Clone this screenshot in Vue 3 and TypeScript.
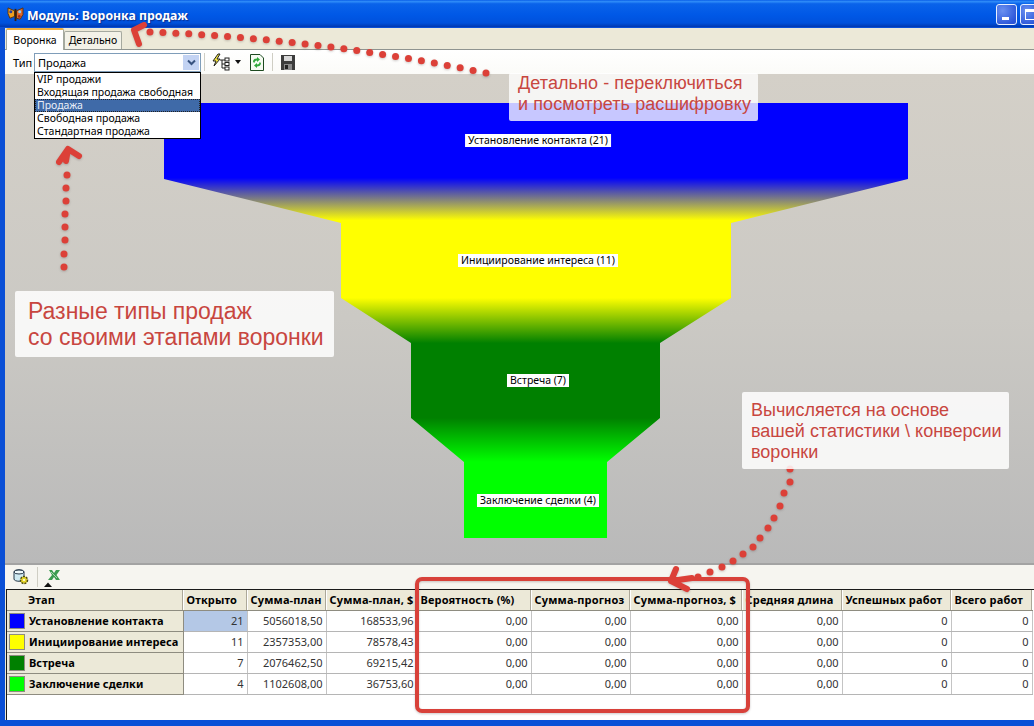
<script setup lang="ts">
const options = ['VIP продажи', 'Входящая продажа свободная', 'Продажа', 'Свободная продажа', 'Стандартная продажа']

const stages = [
  { name: 'Установление контакта', color: '#0000ff', open: 21, plan: '5056018,50', usd: '168533,96', label: 'Установление контакта (21)', y: 134 },
  { name: 'Инициирование интереса', color: '#ffff00', open: 11, plan: '2357353,00', usd: '78578,43', label: 'Инициирование интереса (11)', y: 254 },
  { name: 'Встреча', color: '#008000', open: 7, plan: '2076462,50', usd: '69215,42', label: 'Встреча (7)', y: 374 },
  { name: 'Заключение сделки', color: '#00ff00', open: 4, plan: '1102608,00', usd: '36753,60', label: 'Заключение сделки (4)', y: 494 },
]

const columns = [
  { title: 'Этап', w: 176 }, { title: 'Открыто', w: 64 }, { title: 'Сумма-план', w: 79 }, { title: 'Сумма-план, $', w: 91 },
  { title: 'Вероятность (%)', w: 114 }, { title: 'Сумма-прогноз', w: 99 }, { title: 'Сумма-прогноз, $', w: 112 },
  { title: 'Средняя длина', w: 100 }, { title: 'Успешных работ', w: 109 }, { title: 'Всего работ', w: 81 },
]

function bezier(p0: number[], c: number[], p2: number[], n: number): number[][] {
  const out: number[][] = []
  for (let i = 0; i < n; i++) {
    const t = i / (n - 1)
    const u = 1 - t
    out.push([u * u * p0[0] + 2 * u * t * c[0] + t * t * p2[0], u * u * p0[1] + 2 * u * t * c[1] + t * t * p2[1]])
  }
  return out
}

const dots: number[][] = [
  ...bezier([150, 32], [318, 38.5], [486, 73], 27),
  [67, 175], [66, 188], [66, 201], [65, 214], [65, 227], [65, 240], [64, 254], [64, 267],
  [790, 469], [790, 482], [784, 493], [780, 506], [774, 518], [768, 528], [760, 538], [753, 547],
  [743, 554], [733, 561], [722, 567], [710, 572], [698, 577],
]
</script>

<template>
  <div class="window">
    <header class="titlebar">
      <svg class="app-icon" width="17" height="15" viewBox="0 0 18 16">
        <path d="M1 1 L8 4 L8 10 L3 12 L1 7 Z" fill="#f0a020" stroke="#5b3210" stroke-width="1" />
        <path d="M17 1 L10 4 L10 12 L14 13 L17 8 Z" fill="#e0682a" stroke="#5b3210" stroke-width="1" />
        <circle cx="4" cy="5" r="1.600" fill="#30409a" />
        <circle cx="13.500" cy="5" r="1.600" fill="#8fd0f0" />
        <circle cx="13" cy="10" r="1.400" fill="#a02a20" />
        <path d="M9 2 V15" stroke="#3a2008" stroke-width="2" />
      </svg>
      <span class="title">Модуль: Воронка продаж</span>
      <div class="caption-buttons">
        <span class="cap-btn"><i class="min"></i></span>
        <span class="cap-btn"><i class="max"></i></span>
      </div>
    </header>

    <div class="client">
      <nav class="tabs">
        <span class="tab active">Воронка</span>
        <span class="tab">Детально</span>
      </nav>

      <div class="toolbar">
        <span class="type-label">Тип</span>
        <div class="combo">
          <span>Продажа</span>
          <span class="combo-btn">
            <svg width="9" height="7" viewBox="0 0 9 7"><path d="M1 1.5 L4.5 5 L8 1.5" fill="none" stroke="#37527f" stroke-width="2" /></svg>
          </span>
        </div>
        <i class="sep"></i>
        <svg class="tool tree" width="18" height="18" viewBox="0 0 18 18">
          <path d="M6 1 L1 8 L4 8 L2 13 L8 6 L5 6 L8 1 Z" fill="#f4e640" stroke="#222" stroke-width="1" />
          <path d="M8 7 H15 M10 7 V15 H13 M10 11 H13" fill="none" stroke="#222" />
          <rect x="13" y="5" width="4" height="3" fill="#fff" stroke="#222" />
          <rect x="13" y="9.500" width="4" height="3" fill="#fff" stroke="#222" />
          <rect x="13" y="14" width="4" height="3" fill="#fff" stroke="#222" />
        </svg>
        <svg class="tool drop" width="6" height="4" viewBox="0 0 6 4"><path d="M0 0 H6 L3 4 Z" fill="#111" /></svg>
        <svg class="tool refresh" width="14" height="17" viewBox="0 0 14 17">
          <path d="M.5 .5 H10 L13.500 4 V16.500 H.5 Z" fill="#f6fbf2" stroke="#1d4a20" />
          <path d="M7 3 L10 5.500 L7 8 V6.500 C5 6.500 4.500 8 4.500 9 L3 8 C3 5.500 5 4.500 7 4.500 Z" fill="#2fa83a" />
          <path d="M7 14 L4 11.500 L7 9 V10.500 C9 10.500 9.500 9.500 9.500 8 L11 9 C11 11.500 9 12.500 7 12.500 Z" fill="#2fa83a" />
        </svg>
        <i class="sep second"></i>
        <svg class="tool floppy" width="14" height="15" viewBox="0 0 14 15">
          <path d="M0 0 H14 V15 H0 Z" fill="#3c3c3c" />
          <rect x="3" y="1" width="8" height="5" fill="#d8d8d8" />
          <rect x="3" y="9" width="8" height="6" fill="#8a8a8a" />
          <rect x="4" y="10" width="3" height="4" fill="#222" />
        </svg>
      </div>

      <main class="chart">
        <svg class="funnel" viewBox="5 74 1029 489" width="1029" height="489">
          <defs>
            <linearGradient id="funnelFill" gradientUnits="userSpaceOnUse" x1="0" y1="103" x2="0" y2="538">
              <stop offset="0.172" stop-color="#0000ff" />
              <stop offset="0.27" stop-color="#ffff00" />
              <stop offset="0.448" stop-color="#ffff00" />
              <stop offset="0.552" stop-color="#008000" />
              <stop offset="0.724" stop-color="#008000" />
              <stop offset="0.825" stop-color="#00ff00" />
            </linearGradient>
          </defs>
          <path
            d="M164 103 H908 V179 L731 223 V298 L660 343 V418 L607 462 V538 H464 V462 L411 418 V343 L341 298 V223 L164 179 Z"
            fill="url(#funnelFill)"
          />
        </svg>
        <span
          v-for="s in stages"
          :key="s.label"
          class="funnel-label"
          :style="{ top: s.y - 74 + 'px' }"
        >{{ s.label }}</span>
      </main>

      <div class="grid-toolbar">
        <svg class="db" width="16" height="16" viewBox="0 0 16 16">
          <path d="M1 3 C1 0 11 0 11 3 V10 C11 13 1 13 1 10 Z" fill="#cfeaf2" stroke="#27384a" />
          <ellipse cx="6" cy="3" rx="5" ry="2" fill="#eef9fb" stroke="#27384a" />
          <circle cx="11" cy="11" r="3.500" fill="#e6d62a" stroke="#4d4a10" stroke-width="1.500" stroke-dasharray="2 1" />
          <circle cx="11" cy="11" r="1" fill="#fff" />
        </svg>
        <i class="sep third"></i>
        <svg class="xls" width="17" height="18" viewBox="0 0 17 18">
          <path d="M5 1 H8 L10 4 L12 1 H16 L12.500 6 L16 11 H12 L10 8 L8 11 H4 L8 6 Z" fill="#3c9a50" />
          <path d="M7 3 L13 9" stroke="#a6d8ae" />
          <path d="M0 18 L4 13.500 L8 18 Z" fill="#111" />
        </svg>
      </div>

      <section class="grid">
        <table>
          <colgroup>
            <col v-for="c in columns" :key="c.title" :style="{ width: c.w + 'px' }" />
          </colgroup>
          <thead>
            <tr>
              <th v-for="(c, i) in columns" :key="c.title" :class="{ first: i === 0 }">{{ c.title }}</th>
            </tr>
          </thead>
          <tbody>
            <tr v-for="(s, i) in stages" :key="s.name">
              <td class="stage">
                <span class="stage-inner">
                  <i class="swatch" :style="{ background: s.color }"></i>{{ s.name }}
                </span>
              </td>
              <td :class="{ selected: i === 0 }">{{ s.open }}</td>
              <td>{{ s.plan }}</td>
              <td>{{ s.usd }}</td>
              <td>0,00</td>
              <td>0,00</td>
              <td>0,00</td>
              <td>0,00</td>
              <td>0</td>
              <td>0</td>
            </tr>
          </tbody>
        </table>
      </section>
    </div>

    <ul class="dropdown">
      <li v-for="o in options" :key="o" :class="{ current: o === 'Продажа' }">{{ o }}</li>
    </ul>

    <svg class="marks" width="1034" height="726" viewBox="0 0 1034 726">
      <rect x="417" y="579" width="331" height="132" rx="5" fill="none" stroke="#d8413a" stroke-width="4" />
      <g fill="#dc4038">
        <circle v-for="(d, i) in dots" :key="i" :cx="d[0]" :cy="d[1]" r="3.500" />
      </g>
      <g fill="none" stroke="#dc4038" stroke-width="6" stroke-linecap="round" stroke-linejoin="round">
        <path d="M144 25 L134 30 L139 44" />
        <path d="M59 162 L68 149 L79 156 M68 149 L66 161" />
        <path d="M676 569 L671 581 L687 589 M671 581 L692 578" />
      </g>
    </svg>

    <aside class="note note-detail">Детально - переключиться<br />и посмотреть расшифровку</aside>
    <aside class="note note-types">Разные типы продаж<br />со своими этапами воронки</aside>
    <aside class="note note-calc">Вычисляется на основе<br />вашей статистики \ конверсии<br />воронки</aside>
  </div>
</template>

<style scoped>
.window {
  position: relative;
  width: 1034px;
  height: 726px;
  overflow: hidden;
  display: flex;
  flex-direction: column;
  background: #0a4fd6;
  font-family: "Noto Sans", "Open Sans", sans-serif;
  font-size: 11px;
  color: #000;
}
.titlebar {
  height: 27px;
  flex: none;
  display: flex;
  align-items: center;
  padding-left: 7px;
  background: linear-gradient(#0a5fe8 0, #2f8cf8 6%, #0a63ea 14%, #0058e6 55%, #0051dc 85%, #0038b0 100%);
}
.app-icon { flex: none; margin-top: 2px; }
.title {
  margin-left: 3px;
  color: #fff;
  font-weight: 700;
  font-size: 12.3px;
  margin-top: 3px;
  text-shadow: 1px 1px 1px #0a2f90;
}
.caption-buttons {
  margin-left: auto;
  display: flex;
  gap: 3px;
  margin-right: -7px;
  align-self: flex-start;
  margin-top: 4px;
}
.cap-btn {
  width: 21px;
  height: 21px;
  box-sizing: border-box;
  border: 1px solid #e8f0ff;
  border-radius: 3px;
  background: radial-gradient(circle at 30% 30%, #6a90f0, #2a55d8 80%);
  display: block;
  position: relative;
}
.cap-btn .min {
  position: absolute;
  left: 5px;
  bottom: 4px;
  width: 7px;
  height: 3px;
  background: #fff;
}
.cap-btn .max {
  position: absolute;
  left: 4px;
  top: 4px;
  width: 14px;
  height: 11px;
  border: 1px solid #fff;
  border-top-width: 3px;
  box-sizing: border-box;
}
.client {
  flex: 1;
  min-height: 0;
  margin: 1px 0 6px 5px;
  display: flex;
  flex-direction: column;
  background: #ece9d8;
}
.tabs {
  height: 21px;
  flex: none;
  display: flex;
  align-items: flex-end;
  border-bottom: 1px solid #8f9490;
  padding-left: 1px;
  font-size: 10.5px;
}
.tab {
  height: 17px;
  line-height: 17px;
  width: 56px;
  background: #f3f2e8;
  border: 1px solid #a5a99f;
  border-bottom: none;
  border-radius: 2px 2px 0 0;
  text-align: center;
}
.tab.active {
  height: 20px;
  line-height: 20px;
  width: 56px;
  background: #fff;
  border-top: 2px solid #f0b040;
  margin-bottom: -1px;
  position: relative;
  z-index: 1;
}
.toolbar {
  height: 24px;
  flex: none;
  box-sizing: border-box;
  background: linear-gradient(#fff, #fbfbf8);
  display: flex;
  align-items: center;
  padding-left: 8px;
}
.type-label { width: 21px; flex: none; }
.combo {
  width: 167px;
  height: 19px;
  box-sizing: border-box;
  flex: none;
  border: 1px solid #7f9db9;
  background: #fff;
  display: flex;
  align-items: center;
  justify-content: space-between;
  padding-left: 3px;
}
.combo-btn {
  width: 16px;
  height: 15px;
  margin-right: 1px;
  background: #c3d3f3;
  display: flex;
  align-items: center;
  justify-content: center;
}
.sep {
  width: 1px;
  height: 18px;
  flex: none;
  margin-left: 3px;
  background: #cfcec4;
}
.sep.second { margin-left: 8px; }
.tool { flex: none; }
.tree { margin-left: 7px; }
.drop { margin-left: 5px; }
.refresh { margin-left: 9px; }
.floppy { margin-left: 8px; }
.chart {
  position: relative;
  flex: 1;
  min-height: 0;
  background: linear-gradient(#d4d0c8 0, #cbc9c4 50%, #b9b9b9 100%);
  border-bottom: 2px solid #a3a3a3;
}
.funnel { display: block; }
.funnel-label {
  position: absolute;
  left: 533px;
  transform: translateX(-50%);
  height: 13px;
  line-height: 13px;
  padding: 0 3px;
  background: #fff;
  white-space: nowrap;
  font-size: 10.5px;
}
.grid-toolbar {
  height: 24px;
  flex: none;
  display: flex;
  align-items: center;
  padding-left: 8px;
  background: #f6f5f0;
}
.sep.third { margin-left: 8px; height: 20px; }
.xls { margin-left: 6px; margin-top: 1px; }
.grid {
  height: 131px;
  flex: none;
  box-sizing: border-box;
  background: #fff;
  border-left: 1px solid #1a1a1a;
  margin-left: 1px;
  border-top: 1px solid #1a1a1a;
  overflow: hidden;
}
table {
  border-collapse: collapse;
  table-layout: fixed;
  width: 1025px;
}
th {
  height: 20px;
  padding: 0 0 0 3px;
  box-sizing: border-box;
  background: #ece9d8;
  border-right: 1px solid #fff;
  border-bottom: 1px solid #8e8c80;
  box-shadow: inset -1px 0 0 #aca899;
  font-weight: 700;
  text-align: left;
  white-space: nowrap;
  overflow: hidden;
  letter-spacing: 0.15px;
}
th.first { padding-left: 21px; }
td {
  height: 21px;
  padding: 0 3px 0 0;
  box-sizing: border-box;
  border-right: 1px solid #c4c4c4;
  border-bottom: 1px solid #b5b5b5;
  text-align: right;
  color: #333;
  white-space: nowrap;
  overflow: hidden;
}
td.selected { background: #b4c8e6; }
td.stage {
  background: #ece9d8;
  text-align: left;
  font-weight: 700;
  color: #000;
  padding: 0;
  border-color: #8e8c80;
  letter-spacing: 0.05px;
}
.stage-inner { display: flex; align-items: center; }
.swatch {
  width: 16px;
  height: 16px;
  margin: 0 4px 0 2px;
  flex: none;
  border: 1px solid #8e8c80;
  box-sizing: border-box;
}
.dropdown {
  position: absolute;
  left: 34px;
  top: 72px;
  width: 167px;
  height: 67px;
  margin: 0;
  padding: 0;
  box-sizing: border-box;
  list-style: none;
  background: #fff;
  border: 1px solid #000;
  font-size: 10.5px;
}
.dropdown li {
  height: 13px;
  line-height: 13px;
  padding-left: 2px;
  white-space: nowrap;
}
.dropdown li.current {
  background: #3f6aa8;
  color: #e8eef8;
  outline: 1px dotted #222;
  outline-offset: -1px;
}
.marks {
  position: absolute;
  left: 0;
  top: 0;
  pointer-events: none;
  filter: drop-shadow(0 1px 1px rgba(60, 40, 40, 0.25));
}
.note {
  position: absolute;
  box-sizing: border-box;
  background: rgba(255, 255, 255, 0.78);
  border-radius: 2px;
  color: #c8463f;
  font-family: "Liberation Sans", Arial, sans-serif;
  white-space: nowrap;
}
.note-detail {
  left: 509px;
  top: 73px;
  width: 249px;
  height: 48px;
  padding: 0 0 0 9px;
  font-size: 18px;
  line-height: 21px;
  letter-spacing: 0.08px;
}
.note-types {
  left: 15px;
  top: 291px;
  width: 319px;
  height: 66px;
  padding: 7px 0 0 13px;
  font-size: 23px;
  line-height: 26px;
  background: rgba(255, 255, 255, 0.85);
}
.note-calc {
  left: 742px;
  top: 392px;
  width: 267px;
  height: 77px;
  padding: 8px 0 0 9px;
  font-size: 18px;
  line-height: 21px;
  background: rgba(255, 255, 255, 0.85);
}
</style>
